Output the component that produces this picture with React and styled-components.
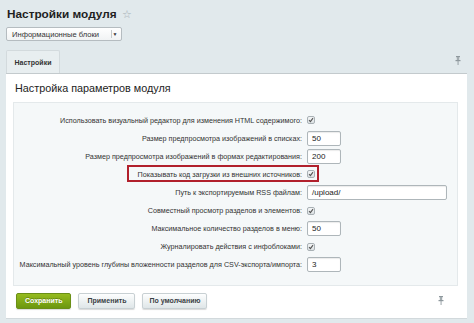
import styled, { createGlobalStyle } from 'styled-components'

const GlobalStyle = createGlobalStyle`
  body {
    margin: 0;
    background: #e1e9ec;
    font-family: 'Liberation Sans', Arial, sans-serif;
    color: #222;
  }
`

const Page = styled.div`
  padding: 4px 7px 5px 6px;
`

const TitleRow = styled.div`
  display: flex;
  align-items: center;
  gap: 5px;
  height: 20px;
  padding-left: 1px;
`

const Title = styled.h1`
  margin: 0;
  font-size: 11.8px;
  font-weight: bold;
  color: #1e1e1e;
`

const Star = styled.span`
  font-size: 11px;
  color: #a6b0b5;
`

const Select = styled.div`
  margin-top: 3px;
  width: 116px;
  height: 14px;
  box-sizing: border-box;
  display: flex;
  align-items: center;
  justify-content: space-between;
  padding: 0 3px 0 5px;
  background: linear-gradient(#fff, #f1f3f4);
  border: 1px solid #b5bcc0;
  border-radius: 2px;
  font-size: 7.6px;
  color: #333;
`

const Arrow = styled.span`
  width: 6px;
  height: 8px;
  border-left: 1px solid #c5cacc;
  display: flex;
  align-items: center;
  justify-content: center;
  font-size: 5px;
`

const TabBar = styled.div`
  margin-top: 9px;
  height: 23px;
  display: flex;
  align-items: stretch;
  justify-content: space-between;
  border-bottom: 1px solid #c3cacd;
`

const Tab = styled.div`
  width: 54px;
  box-sizing: border-box;
  display: flex;
  align-items: center;
  justify-content: center;
  background: #e8eef0;
  border: 1px solid #d3dadd;
  border-bottom: none;
  border-radius: 2px 2px 0 0;
  font-size: 7px;
  font-weight: bold;
  color: #333;
`

const Pin = styled.span`
  align-self: ${({ $top }) => ($top ? 'flex-start' : 'center')};
  margin: ${({ $top }) => ($top ? '6px 6px 0 0' : '0 14px 0 0')};
  display: flex;
`

const Panel = styled.div`
  background: #fff;
  padding: 8px 9px 9px 7px;
  box-shadow: 0 1px 0 #d2d9dc;
`

const Heading = styled.h2`
  margin: 0 0 7px 2px;
  font-size: 10.8px;
  font-weight: normal;
  color: #222;
  line-height: 13px;
`

const Inner = styled.div`
  background: #f5f8f9;
  border: 1px solid #e4e9eb;
  padding: 8px 0 11px;
`

const Row = styled.div`
  position: relative;
  display: grid;
  grid-template-columns: 288px auto;
  column-gap: 5px;
  align-items: center;
  height: 18.1px;

  ${({ $marked }) =>
    $marked &&
    `
    &::after {
      content: '';
      position: absolute;
      left: 113px;
      width: 192px;
      top: 0;
      height: 17px;
      box-sizing: border-box;
      border: 2px solid #b1202c;
    }
  `}
`

const Label = styled.span`
  text-align: right;
  font-size: 7.2px;
  color: #333;
  white-space: nowrap;
`

const Input = styled.div`
  width: ${({ $wide }) => ($wide ? '140px' : '34px')};
  height: 15px;
  box-sizing: border-box;
  display: flex;
  align-items: center;
  padding-left: 4px;
  background: #fff;
  border: 1px solid #aeb6ba;
  border-radius: 2px;
  box-shadow: inset 0 1px 1px rgba(0, 0, 0, 0.08);
  font-size: 8px;
  color: #222;
`

const Check = styled.span`
  width: 8px;
  height: 8px;
  box-sizing: border-box;
  display: flex;
  align-items: center;
  justify-content: center;
  background: linear-gradient(#f3f5f6, #dde2e4);
  border: 1px solid #a9b1b5;
  border-radius: 2px;
`

const Buttons = styled.div`
  display: flex;
  align-items: center;
  gap: 7px;
  margin-top: 7px;
  padding-left: 3px;
`

const Button = styled.button`
  height: 16px;
  padding: 0 ${({ $pad }) => $pad}px;
  font-family: inherit;
  font-size: 7px;
  font-weight: bold;
  border-radius: 2px;
  color: ${({ $primary }) => ($primary ? '#fff' : '#3a4145')};
  background: ${({ $primary }) =>
    $primary ? 'linear-gradient(#95bb1e, #6c970f)' : 'linear-gradient(#fdfefe, #dfe6e8)'};
  border: 1px solid ${({ $primary }) => ($primary ? '#6a8f16' : '#c8d0d3')};
  box-shadow: 0 1px 1px rgba(0, 0, 0, 0.15);
  text-shadow: ${({ $primary }) => ($primary ? '0 -1px 0 rgba(0,0,0,0.25)' : 'none')};
`

const Spacer = styled.div`
  flex: 1;
`

const PinIcon = () => (
  <svg width="6" height="9" viewBox="0 0 6 9">
    <rect x="1" y="0" width="4" height="1.2" fill="#8e989d" />
    <rect x="1.8" y="1" width="2.4" height="3" fill="#a3acb0" />
    <rect x="0.5" y="4" width="5" height="1.2" fill="#8e989d" />
    <rect x="2.6" y="5" width="0.9" height="4" fill="#8e989d" />
  </svg>
)

const CheckMark = () => (
  <Check>
    <svg width="6" height="6" viewBox="0 0 6 6">
      <path d="M1 3.2 L2.4 4.6 L5 1.2" stroke="#555" strokeWidth="1.1" fill="none" />
    </svg>
  </Check>
)

const rows = [
  { label: 'Использовать визуальный редактор для изменения HTML содержимого:', check: true },
  { label: 'Размер предпросмотра изображений в списках:', value: '50' },
  { label: 'Размер предпросмотра изображений в формах редактирования:', value: '200' },
  { label: 'Показывать код загрузки из внешних источников:', check: true, marked: true },
  { label: 'Путь к экспортируемым RSS файлам:', value: '/upload/', wide: true },
  { label: 'Совместный просмотр разделов и элементов:', check: true },
  { label: 'Максимальное количество разделов в меню:', value: '50' },
  { label: 'Журналировать действия с инфоблоками:', check: true },
  { label: 'Максимальный уровень глубины вложенности разделов для CSV-экспорта/импорта:', value: '3' },
]

const App = () => {
  return (
    <>
      <GlobalStyle />
      <Page>
        <TitleRow>
          <Title>Настройки модуля</Title>
          <Star>☆</Star>
        </TitleRow>
        <Select>
          Информационные блоки
          <Arrow>▼</Arrow>
        </Select>
        <TabBar>
          <Tab>Настройки</Tab>
          <Pin $top>
            <PinIcon />
          </Pin>
        </TabBar>
        <Panel>
          <Heading>Настройка параметров модуля</Heading>
          <Inner>
            {rows.map((r) => (
              <Row key={r.label} $marked={r.marked}>
                <Label>{r.label}</Label>
                <div>
                  {r.check ? <CheckMark /> : <Input $wide={r.wide}>{r.value}</Input>}
                </div>
              </Row>
            ))}
          </Inner>
          <Buttons>
            <Button $primary $pad={8}>Сохранить</Button>
            <Button $pad={8}>Применить</Button>
            <Button $pad={6}>По умолчанию</Button>
            <Spacer />
            <Pin>
              <PinIcon />
            </Pin>
          </Buttons>
        </Panel>
      </Page>
    </>
  )
}

export default App
